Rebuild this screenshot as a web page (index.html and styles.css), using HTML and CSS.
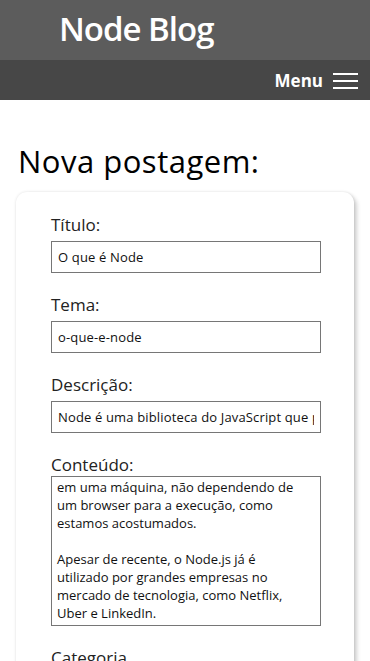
FILE: index.html
```html
<!DOCTYPE html>
<html lang="pt-BR">
<head>
<meta charset="utf-8">
<title>Node Blog</title>
<link rel="stylesheet" href="styles.css">
</head>
<body>
<header class="site-header">
  <div class="brand">Node Blog</div>
  <nav class="nav-bar">
    <span class="menu-label">Menu</span>
    <span class="burger" aria-hidden="true"><i></i><i></i><i></i></span>
  </nav>
</header>
<main class="page">
  <h1 class="page-title">Nova postagem:</h1>
  <form class="card">
    <div class="field">
      <label class="label" for="titulo">Título:</label>
      <input class="input" id="titulo" type="text" value="O que é Node">
    </div>
    <div class="field">
      <label class="label" for="tema">Tema:</label>
      <input class="input" id="tema" type="text" value="o-que-e-node">
    </div>
    <div class="field">
      <label class="label" for="desc">Descrição:</label>
      <input class="input" id="desc" type="text" value="Node é uma biblioteca do JavaScript que permite executar código">
    </div>
    <div class="field">
      <label class="label label-tight" for="conteudo">Conteúdo:</label>
      <textarea class="textarea" id="conteudo">em uma máquina, não dependendo de
um browser para a execução, como
estamos acostumados.

Apesar de recente, o Node.js já é
utilizado por grandes empresas no
mercado de tecnologia, como Netflix,
Uber e LinkedIn.</textarea>
    </div>
    <div class="field">
      <label class="label" for="cat">Categoria</label>
    </div>
  </form>
</main>
</body>
</html>
```
FILE: styles.css
```css
html, body {
  margin: 0;
  padding: 0;
  background: #fff;
  font-family: "Open Sans", "DejaVu Sans", sans-serif;
  overflow: hidden;
}

.site-header {
  display: flex;
  flex-direction: column;
}

.brand {
  height: 60px;
  box-sizing: border-box;
  background: #5c5c5c;
  color: #fff;
  font-size: 33px;
  font-weight: 600;
  letter-spacing: -1px;
  line-height: 58px;
  padding-left: 59px;
}

.nav-bar {
  height: 40px;
  background: #474747;
  display: flex;
  align-items: center;
  justify-content: flex-end;
  padding-right: 12px;
  gap: 10px;
}

.menu-label {
  color: #fff;
  font-size: 17px;
  font-weight: 700;
}

.burger {
  width: 25px;
  display: flex;
  flex-direction: column;
  gap: 5px;
  margin-top: 1px;
}

.burger i {
  display: block;
  height: 2px;
  background: #fff;
}

.page {
  padding: 0 16px;
}

.page-title {
  margin: 0;
  padding-top: 41px;
  font-size: 31px;
  font-weight: 400;
  letter-spacing: 0.5px;
  color: #000;
  line-height: 41px;
  padding-left: 2px;
}

.card {
  margin-top: 10px;
  background: #fff;
  border-radius: 11px;
  box-shadow: 3px 3px 4px rgba(0, 0, 0, 0.18), 0 0 3px rgba(0, 0, 0, 0.12);
  padding: 21px 34px 0 35px;
  display: flex;
  flex-direction: column;
  gap: 20px;
  min-height: 520px;
}

.field {
  display: flex;
  flex-direction: column;
}

.label {
  font-size: 17px;
  color: #222;
  line-height: 23px;
  margin-bottom: 5px;
}

.label-tight {
  margin-bottom: 0;
}

.input {
  width: 270px;
  height: 32px;
  box-sizing: border-box;
  border: 1px solid #767676;
  border-radius: 0;
  padding: 0 6px;
  font-family: "Open Sans", sans-serif;
  font-size: 13px;
  letter-spacing: 0.15px;
  color: #111;
  outline: none;
}

.textarea {
  width: 270px;
  height: 150px;
  box-sizing: border-box;
  border: 1px solid #767676;
  border-radius: 0;
  padding: 1px 5px;
  font-family: "Open Sans", sans-serif;
  font-size: 13px;
  line-height: 18px;
  color: #111;
  resize: none;
  overflow: hidden;
  outline: none;
}
```
